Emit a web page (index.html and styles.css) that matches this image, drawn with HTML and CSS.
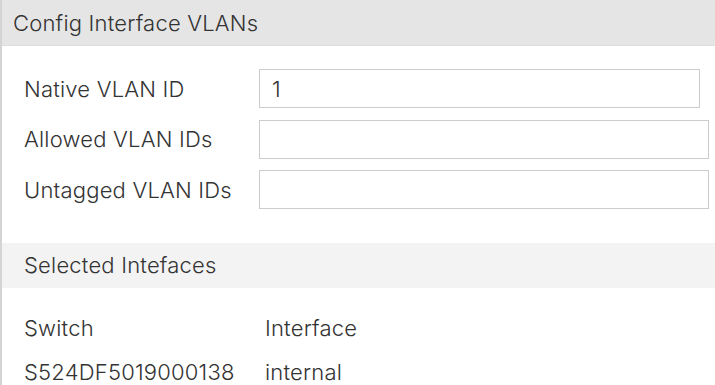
FILE: index.html
```html
<!DOCTYPE html>
<html>
<head>
<meta charset="utf-8">
<link rel="stylesheet" href="styles.css">
</head>
<body>
<div class="panel">
  <div class="panel-header">Config Interface VLANs</div>
  <div class="form">
    <div class="row">
      <label class="label">Native VLAN ID</label>
      <input class="field field-narrow" type="text" value="1">
    </div>
    <div class="row">
      <label class="label">Allowed VLAN IDs</label>
      <input class="field" type="text" value="">
    </div>
    <div class="row">
      <label class="label">Untagged VLAN IDs</label>
      <input class="field" type="text" value="">
    </div>
  </div>
  <div class="section-header">Selected Intefaces</div>
  <div class="table">
    <div class="trow">
      <div class="cell c1">Switch</div>
      <div class="cell">Interface</div>
    </div>
    <div class="trow">
      <div class="cell c1">S524DF5019000138</div>
      <div class="cell">internal</div>
    </div>
  </div>
</div>
</body>
</html>
```
FILE: styles.css
```css
html, body {
  margin: 0;
  padding: 0;
  background: #ffffff;
}
body {
  font-family: Inter, "Noto Sans", sans-serif;
  font-size: 22px;
  font-weight: 350;
  letter-spacing: 0.2px;
  color: #333333;
}
.panel {
  width: 715px;
  height: 385px;
  border-left: 2px solid #d4d4d4;
  box-sizing: border-box;
  overflow: hidden;
}
.panel-header {
  height: 46px;
  line-height: 46px;
  background: #e5e5e5;
  padding-left: 11px;
  border-bottom: 1px solid #dedede;
  box-sizing: border-box;
}
.form {
  padding-top: 23px;
  display: flex;
  flex-direction: column;
  gap: 11.5px;
}
.row {
  display: flex;
  align-items: center;
  height: 39px;
}
.label {
  width: 257px;
  padding-left: 22px;
  box-sizing: border-box;
  flex: none;
}
.field {
  width: 450px;
  height: 39px;
  box-sizing: border-box;
  border: 1px solid #cccccc;
  border-radius: 0;
  padding: 0 12px;
  font-family: inherit;
  font-size: 22px;
  font-weight: 350;
  letter-spacing: 0.2px;
  color: #333333;
  outline: none;
  margin: 0;
}
.field-narrow {
  width: 441px;
}
.section-header {
  margin-top: 34px;
  height: 45px;
  line-height: 45px;
  background: #f3f3f3;
  padding-left: 22px;
}
.table {
  padding-top: 18px;
}
.trow {
  display: flex;
  height: 44px;
  align-items: center;
}
.cell {
  white-space: nowrap;
}
.c1 {
  width: 263px;
  padding-left: 22px;
  box-sizing: border-box;
}
```
